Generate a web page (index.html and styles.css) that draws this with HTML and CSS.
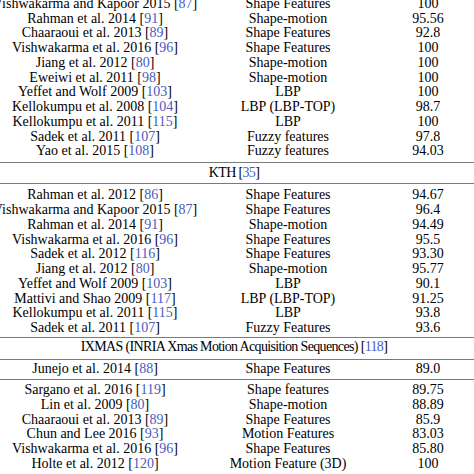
FILE: index.html
```html
<!DOCTYPE html>
<html>
<head>
<meta charset="utf-8">
<link rel="stylesheet" href="styles.css">
</head>
<body>
<div class="table">
  <div class="group">
    <div class="row"><span>Vishwakarma and Kapoor 2015 [<a>87</a>]</span><span>Shape Features</span><span>100</span></div>
    <div class="row"><span>Rahman et al. 2014 [<a>91</a>]</span><span>Shape-motion</span><span>95.56</span></div>
    <div class="row"><span>Chaaraoui et al. 2013 [<a>89</a>]</span><span>Shape Features</span><span>92.8</span></div>
    <div class="row"><span>Vishwakarma et al. 2016 [<a>96</a>]</span><span>Shape Features</span><span>100</span></div>
    <div class="row"><span>Jiang et al. 2012 [<a>80</a>]</span><span>Shape-motion</span><span>100</span></div>
    <div class="row"><span>Eweiwi et al. 2011 [<a>98</a>]</span><span>Shape-motion</span><span>100</span></div>
    <div class="row"><span>Yeffet and Wolf 2009 [<a>103</a>]</span><span>LBP</span><span>100</span></div>
    <div class="row"><span>Kellokumpu et al. 2008 [<a>104</a>]</span><span>LBP (LBP-TOP)</span><span>98.7</span></div>
    <div class="row"><span>Kellokumpu et al. 2011 [<a>115</a>]</span><span>LBP</span><span>100</span></div>
    <div class="row"><span>Sadek et al. 2011 [<a>107</a>]</span><span>Fuzzy features</span><span>97.8</span></div>
    <div class="row"><span>Yao et al. 2015 [<a>108</a>]</span><span>Fuzzy features</span><span>94.03</span></div>
  </div>
  <div class="rule rule-top"></div>
  <div class="span-row">KTH [<a>35</a>]</div>
  <div class="rule rule-bottom"></div>
  <div class="group">
    <div class="row"><span>Rahman et al. 2012 [<a>86</a>]</span><span>Shape Features</span><span>94.67</span></div>
    <div class="row"><span>Vishwakarma and Kapoor 2015 [<a>87</a>]</span><span>Shape Features</span><span>96.4</span></div>
    <div class="row"><span>Rahman et al. 2014 [<a>91</a>]</span><span>Shape-motion</span><span>94.49</span></div>
    <div class="row"><span>Vishwakarma et al. 2016 [<a>96</a>]</span><span>Shape Features</span><span>95.5</span></div>
    <div class="row"><span>Sadek et al. 2012 [<a>116</a>]</span><span>Shape Features</span><span>93.30</span></div>
    <div class="row"><span>Jiang et al. 2012 [<a>80</a>]</span><span>Shape-motion</span><span>95.77</span></div>
    <div class="row"><span>Yeffet and Wolf 2009 [<a>103</a>]</span><span>LBP</span><span>90.1</span></div>
    <div class="row"><span>Mattivi and Shao 2009 [<a>117</a>]</span><span>LBP (LBP-TOP)</span><span>91.25</span></div>
    <div class="row"><span>Kellokumpu et al. 2011 [<a>115</a>]</span><span>LBP</span><span>93.8</span></div>
    <div class="row"><span>Sadek et al. 2011 [<a>107</a>]</span><span>Fuzzy Features</span><span>93.6</span></div>
  </div>
  <div class="rule rule-top2"></div>
  <div class="span-row">IXMAS (INRIA Xmas Motion Acquisition Sequences) [<a>118</a>]</div>
  <div class="rule rule-mid"></div>
  <div class="row"><span>Junejo et al. 2014 [<a>88</a>]</span><span>Shape Features</span><span>89.0</span></div>
  <div class="rule rule-bottom2"></div>
  <div class="group">
    <div class="row"><span>Sargano et al. 2016 [<a>119</a>]</span><span>Shape features</span><span>89.75</span></div>
    <div class="row"><span>Lin et al. 2009 [<a>80</a>]</span><span>Shape-motion</span><span>88.89</span></div>
    <div class="row"><span>Chaaraoui et al. 2013 [<a>89</a>]</span><span>Shape Features</span><span>85.9</span></div>
    <div class="row"><span>Chun and Lee 2016 [<a>93</a>]</span><span>Motion Features</span><span>83.03</span></div>
    <div class="row"><span>Vishwakarma et al. 2016 [<a>96</a>]</span><span>Shape Features</span><span>85.80</span></div>
    <div class="row"><span>Holte et al. 2012 [<a>120</a>]</span><span>Motion Feature (3D)</span><span>100</span></div>
  </div>
</div>
</body>
</html>
```
FILE: styles.css
```css
html, body {
  margin: 0;
  padding: 0;
  background: #ffffff;
  overflow: hidden;
}
body {
  width: 474px;
  height: 474px;
  font-family: "Liberation Serif", "Times New Roman", serif;
  font-size: 14px;
  color: #000000;
}
.table {
  display: flex;
  flex-direction: column;
  margin-top: -3.2px;
}
.row {
  display: grid;
  grid-template-columns: 190px 196px 84px;
  height: 14.75px;
  line-height: 14.75px;
  white-space: nowrap;
}
.row span {
  text-align: center;
  display: flex;
  justify-content: center;
}
.span-row {
  height: 14.75px;
  line-height: 14.75px;
  text-align: center;
  width: 468px;
  white-space: nowrap;
  letter-spacing: -0.65px;
}
a {
  color: #4a5bc0;
}
.rule {
  height: 1px;
  background: #7a7a7a;
  width: 474px;
}
.rule-top {
  margin-top: 3.4px;
  margin-bottom: 2.5px;
}
.rule-top2 {
  margin-top: 1.2px;
  margin-bottom: 1.6px;
}
.rule-mid {
  margin-top: 4px;
  margin-bottom: 2.2px;
}
.rule-bottom {
  margin-top: 2.6px;
  margin-bottom: 4.2px;
}
.rule-bottom2 {
  margin-top: 2.6px;
  margin-bottom: 3px;
}
```
